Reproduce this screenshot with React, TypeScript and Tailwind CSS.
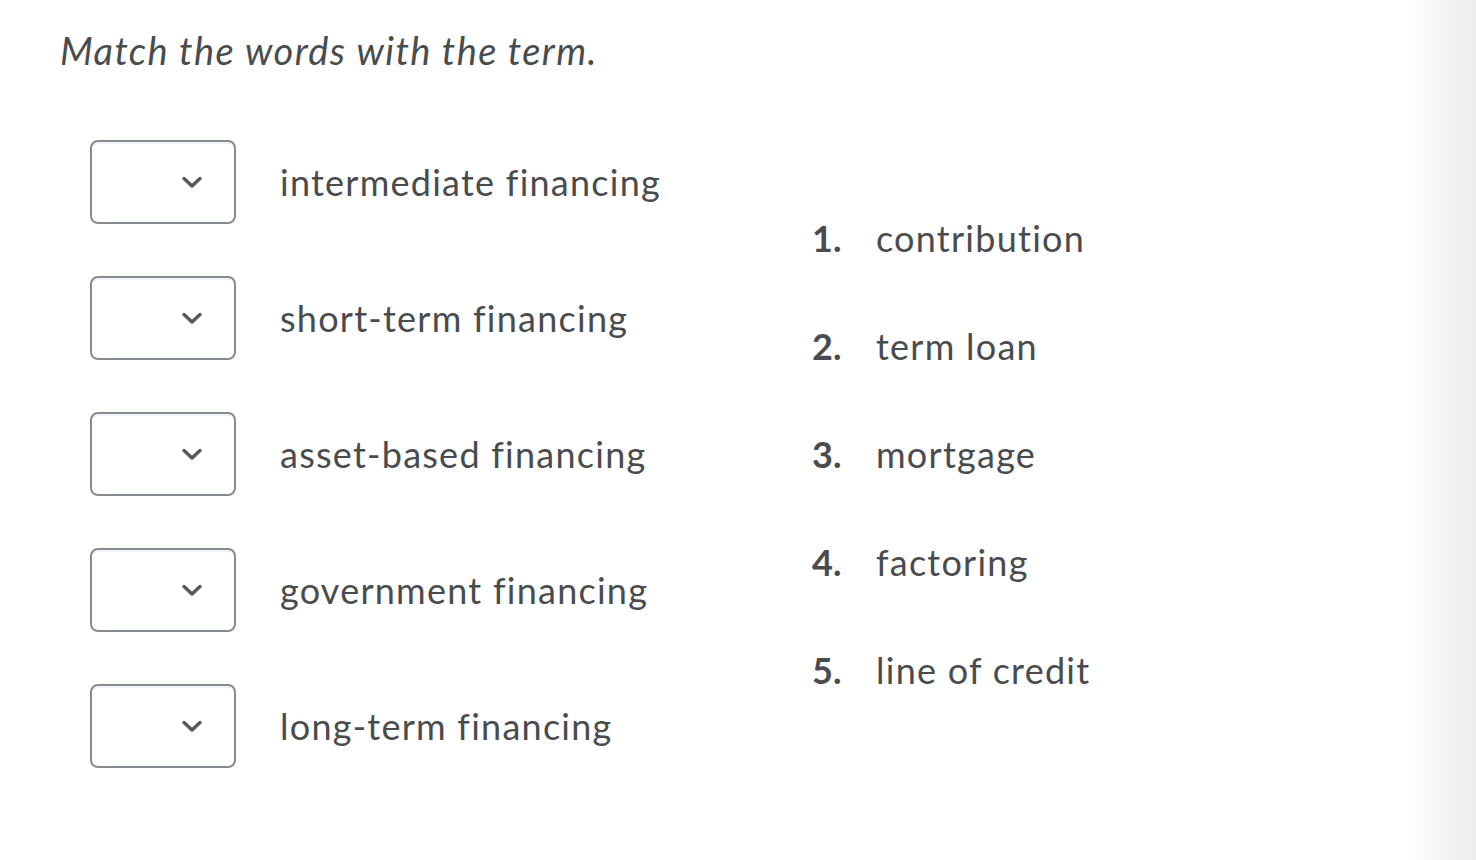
import React from "react";

const terms = [
  "intermediate financing",
  "short-term financing",
  "asset-based financing",
  "government financing",
  "long-term financing",
];

const answers = ["contribution", "term loan", "mortgage", "factoring", "line of credit"];

function Chevron() {
  return (
    <svg width="22" height="13" viewBox="0 0 22 13" className="block">
      <path d="M3 2.5 L11 10 L19 2.5" fill="none" stroke="#55595c" strokeWidth="3.4" strokeLinecap="round" strokeLinejoin="round" />
    </svg>
  );
}

function SelectBox() {
  return (
    <div className="w-[146px] h-[84px] shrink-0 rounded-[8px] border-2 border-[#878b8f] bg-white shadow-[inset_0_2px_0_0_#f1f3f5] flex items-center justify-end pr-[31px]">
      <Chevron />
    </div>
  );
}

export default function App() {
  return (
    <div
      className="relative w-[1476px] h-[860px] bg-white text-[#494c4e] overflow-hidden [font-variant-ligatures:none]"
      style={{ fontFamily: "Lato, 'Open Sans', sans-serif" }}
    >
      <h1 className="pl-[60px] pt-[26px] text-[38px] leading-[48px] italic font-normal tracking-[1.4px]">
        Match the words with the term.
      </h1>

      <div className="flex items-center pl-[90px] mt-[66px]">
        <div className="w-[722px] flex flex-col gap-[52px]">
          {terms.map((t) => (
            <div key={t} className="flex items-center">
              <SelectBox />
              <span className="ml-[44px] text-[36px] leading-[44px] tracking-[1.25px]">{t}</span>
            </div>
          ))}
        </div>

        <ol className="flex flex-col gap-[64px]">
          {answers.map((a, i) => (
            <li key={a} className="flex items-center text-[36px] leading-[44px]">
              <span className="w-[64px] font-bold">{i + 1}.</span>
              <span className="tracking-[1.25px]">{a}</span>
            </li>
          ))}
        </ol>
      </div>

      <div className="absolute top-0 right-0 h-full w-[70px] bg-gradient-to-r from-white to-[#ececec] pointer-events-none" />
    </div>
  );
}
